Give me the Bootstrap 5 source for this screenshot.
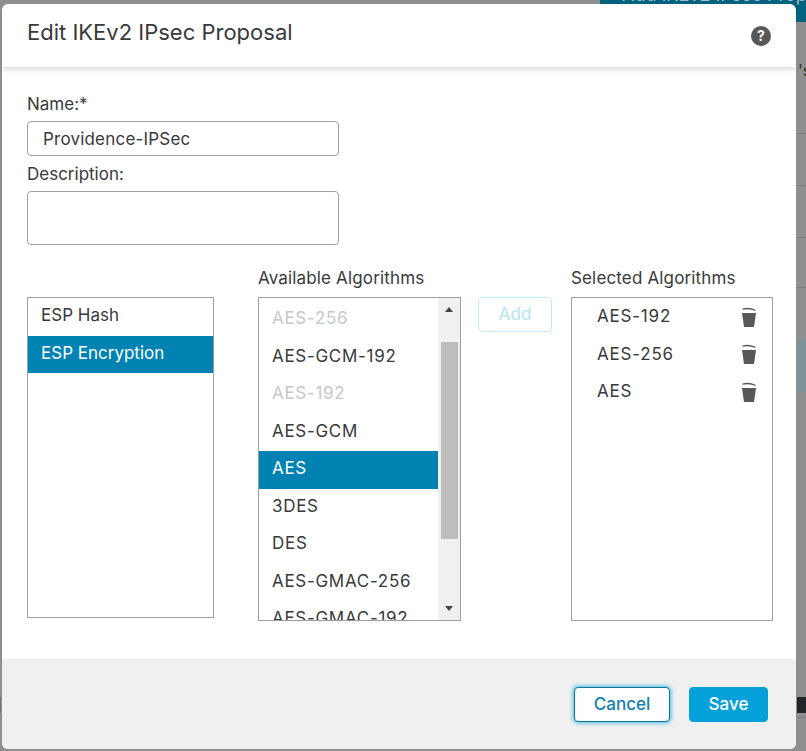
<!DOCTYPE html>
<html lang="en">
<head>
<meta charset="utf-8">
<title>Edit IKEv2 IPsec Proposal</title>
<link href="https://cdn.jsdelivr.net/npm/bootstrap@5.3.0/dist/css/bootstrap.min.css" rel="stylesheet">
<style>
html,body{height:751px;overflow:hidden}
body{background:#8f8f8f;font-family:Inter,"Liberation Sans",sans-serif;color:#39393b;font-size:17px;position:relative}
.bg-layer{position:absolute;inset:0;overflow:hidden}
.bg-teal{position:absolute;left:600px;right:0;top:-5px;height:27px;background:#00627f;color:#a8bcc4;font-size:18px;padding-left:22px;line-height:0;white-space:nowrap;overflow:hidden}
.bg-line{position:absolute;left:797px;right:0;height:1px;background:#7c7c7c}
.bg-blue{position:absolute;left:797px;right:0;top:340px;height:52px;background:#7c9298}
.bg-dark{position:absolute;left:797px;right:0;top:697px;height:16px;background:#747474}
.bg-dark-l{position:absolute;left:0;width:1px;top:697px;height:16px;background:#747474}
.bg-s{position:absolute;left:798px;top:58px;font-size:16px;color:#303030}
.shell{position:relative;padding:4px 10px 2px 2px;height:751px}
.dlg{height:745px;border:0;border-radius:6px;overflow:hidden;background:#fff;display:flex;flex-direction:column}
.dlg-head{height:63px;padding:15px 25px 0;display:flex;justify-content:space-between;align-items:flex-start;border:0;box-shadow:0 2px 6px rgba(0,0,0,.16);position:relative;flex:none}
.dlg-title{font-size:22px;line-height:27px;font-weight:400;margin:0;color:#39393b}
.help-dot{width:20px;height:20px;border-radius:50%;background:#58585b;color:#fff;font-size:14px;font-weight:700;line-height:20px;text-align:center;margin-top:7px;margin-right:0}
.dlg-body{flex:1;padding:25px 25px 0;position:relative}
.fld-label{display:block;font-size:17px;line-height:24px;margin:0 0 5px;color:#39393b}
.fld-input{width:312px;height:35px;border:1px solid #9e9ea2;border-radius:4px;padding:0 15px;font-size:17px;letter-spacing:.2px;color:#39393b;display:block;margin-bottom:6px;background:#fff;outline:0;font-family:inherit}
.fld-area{height:54px;resize:none;margin-bottom:21px}
.algo-row{display:flex;align-items:flex-start}
.algo-row>div{flex:none}
.col-cat{width:187px;margin-top:31px;margin-right:44px}
.col-avail{width:203px;margin-right:17px}
.col-add{width:74px;margin-top:31px;margin-right:19px}
.col-sel{width:202px}
.sub-head{font-size:17px;line-height:24px;height:24px;margin:0 0 7px;font-weight:400;letter-spacing:.15px;color:#39393b;white-space:nowrap}
.pick-box{border:1px solid #9e9ea2;background:#fff;border-radius:0}
.cat-box{height:321px;display:block}
.cat-item{height:37.5px;line-height:35px;padding:0 13px;color:#39393b;border:0;background:transparent}
.cat-item.is-on{background:#0083b3;color:#fff}
.avail-box{height:324px;display:flex;overflow:hidden}
.avail-list{flex:1;overflow:hidden;height:322px;padding-top:3px}
.avail-item{height:37.5px;line-height:34px;padding:0 13px;white-space:nowrap;color:#39393b;letter-spacing:.7px}
.avail-item.is-off{color:#c6c7ca}
.avail-item.is-on{background:#0083b3;color:#fff}
.fake-bar{width:22px;background:#f0f0f0;height:322px;display:flex;flex-direction:column;align-items:center;flex:none;padding:0 2px}
.bar-up{width:0;height:0;border:4px solid transparent;border-top:0;border-bottom:5px solid #444;margin-top:9px}
.bar-thumb{width:17px;height:197px;background:#bdbdbd;margin-top:30px}
.bar-down{width:0;height:0;border:4px solid transparent;border-bottom:0;border-top:5px solid #444;margin-top:67px}
.add-btn{width:74px;height:35px;border:1px solid #b8e4f3;border-radius:4px;background:#fff;color:#b8e4f3;font-weight:500;font-size:17px;padding:0;opacity:1}
.add-btn:disabled{border-color:#c5e9f5;color:#bfe6f4;background:#fff;opacity:1}
.sel-box{height:324px;padding-top:0}
.sel-item{height:37.5px;padding:0 15px 0 25px;display:flex;justify-content:space-between;align-items:center;letter-spacing:.8px}
.dlg-foot{height:90px;background:#f0f0f0;border:0;display:flex;justify-content:flex-end;align-items:flex-start;padding:28px 28px 0 0;gap:19px;flex:none;margin-top:0}
.act-btn{height:35px;border-radius:4px;font-size:17px;font-weight:500;padding:0;line-height:31px}
.act-cancel{width:96px;background:#fff;color:#0f7fb0;border:1px solid #0176a3;box-shadow:0 0 4px 1px #4bb8dc}
.act-save{width:79px;background:#04a0d9;color:#fff;border:1px solid #04a0d9}
</style>
</head>
<body>
<div class="bg-layer" aria-hidden="true">
  <div class="bg-teal">Add IKEv2 IPsec Proposal</div>
  <div class="bg-s">'s</div>
  <div class="bg-line" style="top:133px"></div>
  <div class="bg-line" style="top:185px"></div>
  <div class="bg-line" style="top:237px"></div>
  <div class="bg-line" style="top:287px"></div>
  <div class="bg-blue"></div>
  <div class="bg-dark"></div>
  <div class="bg-line" style="top:717px"></div>
  <div class="bg-dark-l"></div>
</div>
<div class="shell">
  <div class="modal-content dlg">
    <div class="modal-header dlg-head">
      <h5 class="modal-title dlg-title">Edit IKEv2 IPsec Proposal</h5>
      <div class="help-dot">?</div>
    </div>
    <div class="modal-body dlg-body">
      <label class="fld-label">Name:*</label>
      <input class="fld-input" type="text" value="Providence-IPSec">
      <label class="fld-label">Description:</label>
      <textarea class="fld-input fld-area"></textarea>
      <div class="algo-row">
        <div class="col-cat">
          <div class="pick-box cat-box">
            <div class="cat-item">ESP Hash</div>
            <div class="cat-item is-on">ESP Encryption</div>
          </div>
        </div>
        <div class="col-avail">
          <h6 class="sub-head">Available Algorithms</h6>
          <div class="pick-box avail-box">
            <div class="avail-list">
              <div class="avail-item is-off">AES-256</div>
              <div class="avail-item">AES-GCM-192</div>
              <div class="avail-item is-off">AES-192</div>
              <div class="avail-item">AES-GCM</div>
              <div class="avail-item is-on">AES</div>
              <div class="avail-item">3DES</div>
              <div class="avail-item">DES</div>
              <div class="avail-item">AES-GMAC-256</div>
              <div class="avail-item">AES-GMAC-192</div>
            </div>
            <div class="fake-bar"><span class="bar-up"></span><span class="bar-thumb"></span><span class="bar-down"></span></div>
          </div>
        </div>
        <div class="col-add"><button class="btn add-btn" disabled>Add</button></div>
        <div class="col-sel">
          <h6 class="sub-head">Selected Algorithms</h6>
          <div class="pick-box sel-box">
            <div class="sel-item"><span>AES-192</span><svg width="16" height="20" viewBox="0 0 16 20"><path d="M1.500 1.500Q8-.5 14.500 2.800L14.500 4Q8 1 1.500 2.800Z" fill="#58585b"/><path d="M1 6H15L13 20H3Z" fill="#58585b"/></svg></div>
            <div class="sel-item"><span>AES-256</span><svg width="16" height="20" viewBox="0 0 16 20"><path d="M1.500 1.500Q8-.5 14.500 2.800L14.500 4Q8 1 1.500 2.800Z" fill="#58585b"/><path d="M1 6H15L13 20H3Z" fill="#58585b"/></svg></div>
            <div class="sel-item"><span>AES</span><svg width="16" height="20" viewBox="0 0 16 20"><path d="M1.500 1.500Q8-.5 14.500 2.800L14.500 4Q8 1 1.500 2.800Z" fill="#58585b"/><path d="M1 6H15L13 20H3Z" fill="#58585b"/></svg></div>
          </div>
        </div>
      </div>
    </div>
    <div class="modal-footer dlg-foot">
      <button class="btn act-btn act-cancel">Cancel</button>
      <button class="btn act-btn act-save">Save</button>
    </div>
  </div>
</div>
<script src="https://cdn.jsdelivr.net/npm/bootstrap@5.3.0/dist/js/bootstrap.bundle.min.js"></script>
</body>
</html>
